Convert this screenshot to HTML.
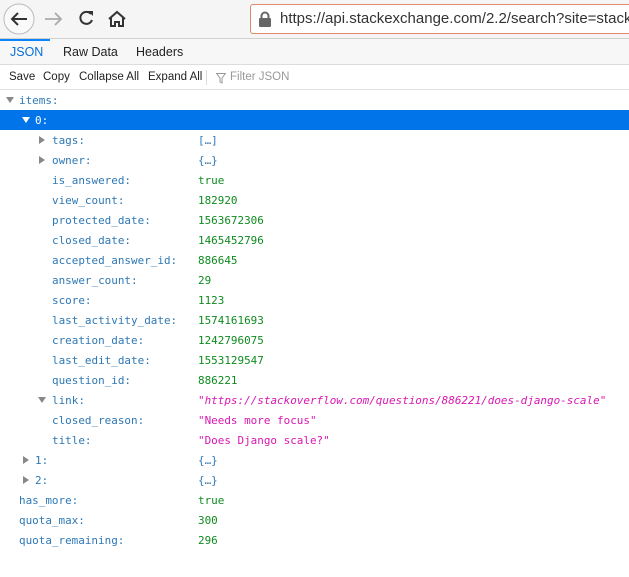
<!DOCTYPE html>
<html><head><style>
*{margin:0;padding:0;box-sizing:border-box}
body{width:629px;height:577px;overflow:hidden;background:#fff;font-family:"Liberation Sans","DejaVu Sans",sans-serif;position:relative}
.nav{position:absolute;left:0;top:0;width:629px;height:39px;background:#f5f5f5;border-bottom:1px solid #d0d0d0;overflow:hidden}
.url{position:absolute;left:250px;top:4px;width:400px;height:30px;border:1px solid #e0896a;border-radius:3px;background:#fff;font-size:15px;color:#333;line-height:28px;padding-left:29px;white-space:nowrap;overflow:hidden}
.tabs{position:absolute;left:0;top:39px;width:629px;height:26px;background:#f7f7f7;border-bottom:1px solid #dcdcdc;font-size:12.5px;color:#222}
.tabs span{position:absolute;top:6px}
.tb{position:absolute;left:0;top:65px;width:629px;height:25px;background:#fff;border-bottom:1px solid #e0e0e0;font-size:11.5px;color:#222}
.tb span{position:absolute;top:6px}
.row{position:absolute;left:0;width:629px;height:20px;font-family:"DejaVu Sans Mono","Liberation Mono",monospace;font-size:10.95px;line-height:21px;white-space:pre;overflow:hidden}
.k{position:absolute;color:#2e78b5}
.v{position:absolute;left:198px}
.n{color:#0f8a1f}.s{color:#d916b2}.b{color:#2e78b5}
.ar{position:absolute;top:7px;width:0;height:0}
.dn{border-left:4px solid transparent;border-right:4px solid transparent;border-top:6px solid #888}
.rt{border-top:4px solid transparent;border-bottom:4px solid transparent;border-left:6px solid #888;top:6px}
.sel{background:#0074e8}
.sel .k{color:#fff}.sel .dn{border-top-color:#fff}
</style></head><body>
<div class="nav">
<svg width="250" height="39" style="position:absolute;left:0;top:0">
<circle cx="19" cy="19" r="15" fill="#fafafa" stroke="#bbb" stroke-width="1"/>
<path d="M27 19H12M18 13l-6 6 6 6" stroke="#333" stroke-width="2" fill="none"/>
<path d="M61 19H45M55 13l6 6-6 6" stroke="#aaa" stroke-width="1.8" fill="none"/>
<path d="M91 14a6 6 0 1 0 1 6" stroke="#333" stroke-width="2" fill="none"/><path d="M88 11l5 0 0 5z" fill="#333"/>
<path d="M109 19l8-7 8 7M111 18v8h4v-4h4v4h4v-8" stroke="#333" stroke-width="2" fill="none"/>
</svg>
<div class="url"><svg width="14" height="16" style="position:absolute;left:7px;top:6px"><rect x="1" y="7" width="12" height="9" rx="1" fill="#666"/><path d="M3.5 7V5a3.5 3.5 0 0 1 7 0v2" stroke="#666" stroke-width="2" fill="none"/></svg>https://api.stackexchange.com/2.2/search?site=stackoverflow</div>
</div>
<div class="tabs"><div style="position:absolute;left:0;top:0;width:50px;height:2px;background:#0a84ff"></div>
<span style="left:10px;color:#0a6fd6">JSON</span><span style="left:63px">Raw Data</span><span style="left:136px">Headers</span></div>
<div class="tb"><span style="left:9px">Save</span><span style="left:43px">Copy</span><span style="left:79px">Collapse All</span><span style="left:148px">Expand All</span>
<div style="position:absolute;left:206px;top:5px;width:1px;height:15px;background:#ddd"></div>
<svg width="10" height="11" style="position:absolute;left:216px;top:8px"><path d="M0.5 0.5h9l-3.5 4.5v5l-2-1v-4z" stroke="#999" fill="none"/></svg>
<span style="left:230px;color:#999">Filter JSON</span></div>

<div class="row" style="top:90px"><i class="ar dn" style="left:6px"></i><span class="k" style="left:19px">items:</span></div>
<div class="row sel" style="top:110px"><i class="ar dn" style="left:22px"></i><span class="k" style="left:35px">0:</span></div>
<div class="row" style="top:130px"><i class="ar rt" style="left:39px"></i><span class="k" style="left:52px">tags:</span><span class="v b">[…]</span></div>
<div class="row" style="top:150px"><i class="ar rt" style="left:39px"></i><span class="k" style="left:52px">owner:</span><span class="v b">{…}</span></div>
<div class="row" style="top:170px"><span class="k" style="left:52px">is_answered:</span><span class="v n">true</span></div>
<div class="row" style="top:190px"><span class="k" style="left:52px">view_count:</span><span class="v n">182920</span></div>
<div class="row" style="top:210px"><span class="k" style="left:52px">protected_date:</span><span class="v n">1563672306</span></div>
<div class="row" style="top:230px"><span class="k" style="left:52px">closed_date:</span><span class="v n">1465452796</span></div>
<div class="row" style="top:250px"><span class="k" style="left:52px">accepted_answer_id:</span><span class="v n">886645</span></div>
<div class="row" style="top:270px"><span class="k" style="left:52px">answer_count:</span><span class="v n">29</span></div>
<div class="row" style="top:290px"><span class="k" style="left:52px">score:</span><span class="v n">1123</span></div>
<div class="row" style="top:310px"><span class="k" style="left:52px">last_activity_date:</span><span class="v n">1574161693</span></div>
<div class="row" style="top:330px"><span class="k" style="left:52px">creation_date:</span><span class="v n">1242796075</span></div>
<div class="row" style="top:350px"><span class="k" style="left:52px">last_edit_date:</span><span class="v n">1553129547</span></div>
<div class="row" style="top:370px"><span class="k" style="left:52px">question_id:</span><span class="v n">886221</span></div>
<div class="row" style="top:390px"><i class="ar dn" style="left:38px"></i><span class="k" style="left:52px">link:</span><span class="v s">"<i>https://stackoverflow.com/questions/886221/does-django-scale</i>"</span></div>
<div class="row" style="top:410px"><span class="k" style="left:52px">closed_reason:</span><span class="v s">"Needs more focus"</span></div>
<div class="row" style="top:430px"><span class="k" style="left:52px">title:</span><span class="v s">"Does Django scale?"</span></div>
<div class="row" style="top:450px"><i class="ar rt" style="left:23px"></i><span class="k" style="left:35px">1:</span><span class="v b">{…}</span></div>
<div class="row" style="top:470px"><i class="ar rt" style="left:23px"></i><span class="k" style="left:35px">2:</span><span class="v b">{…}</span></div>
<div class="row" style="top:490px"><span class="k" style="left:19px">has_more:</span><span class="v n">true</span></div>
<div class="row" style="top:510px"><span class="k" style="left:19px">quota_max:</span><span class="v n">300</span></div>
<div class="row" style="top:530px"><span class="k" style="left:19px">quota_remaining:</span><span class="v n">296</span></div>
</body></html>
